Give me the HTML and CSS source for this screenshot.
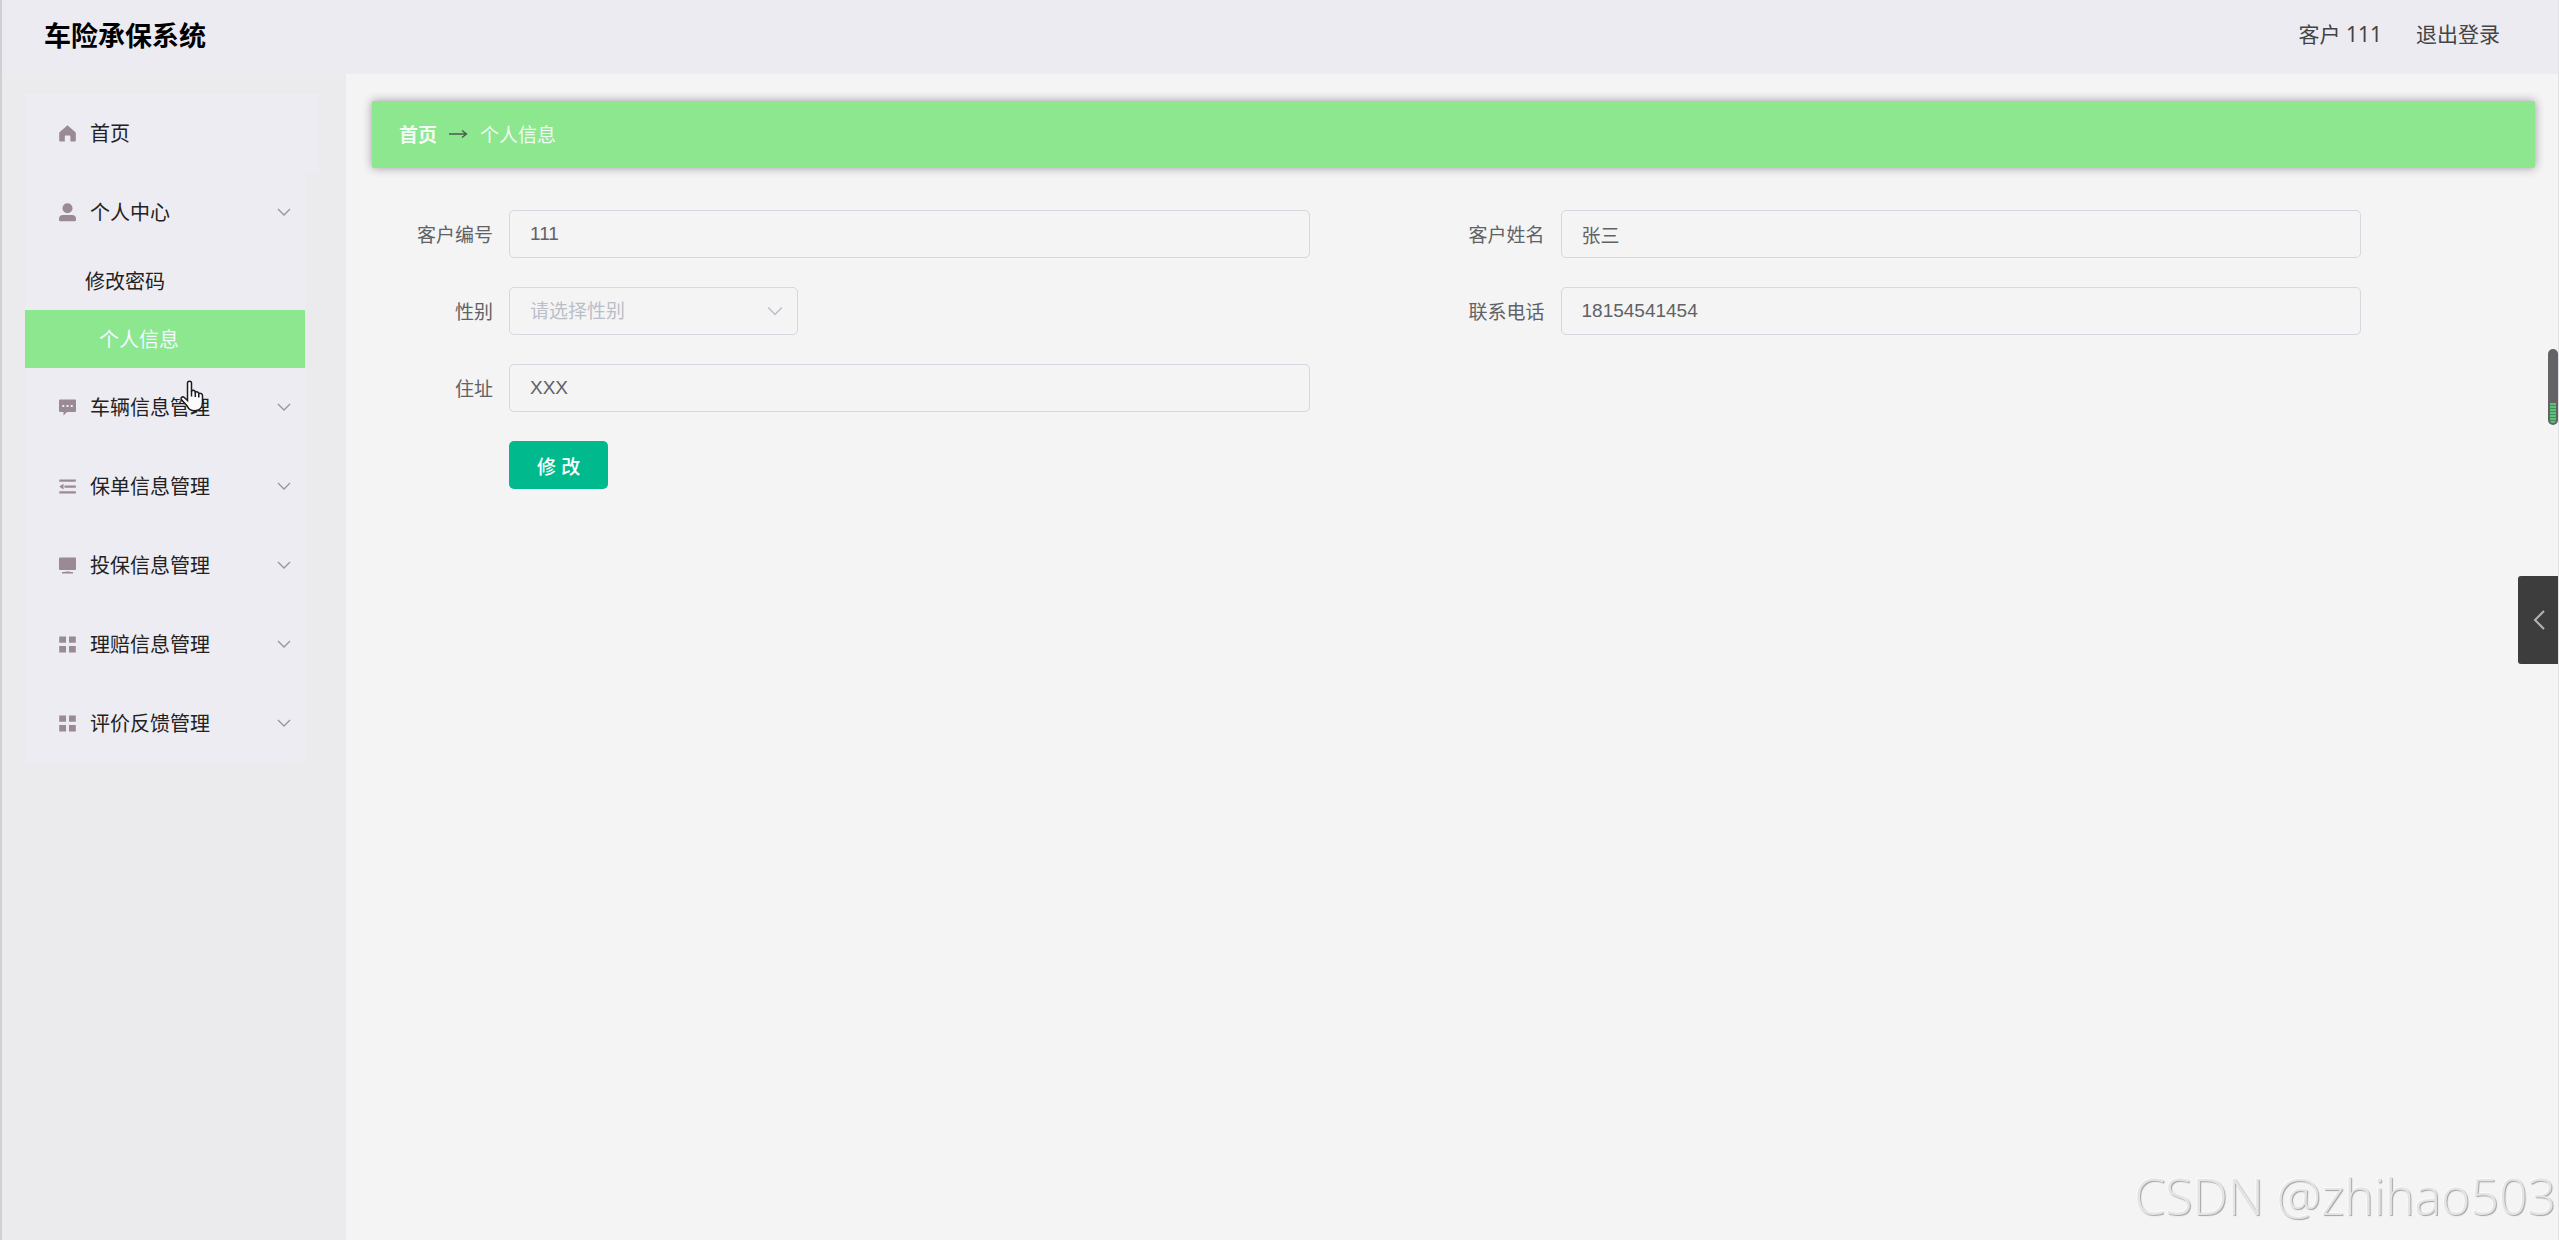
FILE: index.html
```html
<!DOCTYPE html>
<html lang="zh-CN">
<head>
<meta charset="utf-8">
<title>车险承保系统</title>
<link rel="stylesheet" href="styles.css">
</head>
<body>
<svg class="sprite" width="0" height="0" aria-hidden="true">
  <symbol id="i-down" viewBox="0 0 14 14"><path d="M1 4l6 6 6-6" fill="none" stroke="currentColor" stroke-width="1.3"/></symbol>
  <symbol id="i-home" viewBox="0 -1 17 19"><path d="M8.5 0.3L16.2 7a1.6 1.6 0 0 1 .6 1.200V15.500a1 1 0 0 1-1 1H11.400V11.600a1 1 0 0 0-1-1H6.800a1 1 0 0 0-1 1V16.500H1.200a1 1 0 0 1-1-1V8.200A1.600 1.600 0 0 1 .8 7z"/></symbol>
  <symbol id="i-user" viewBox="0 0 17 19"><circle cx="8.500" cy="5.300" r="5"/><path d="M4 12h9a4 4 0 0 1 4 4v1a1.300 1.300 0 0 1-1.300 1.300H1.300A1.300 1.300 0 0 1 0 17v-1a4 4 0 0 1 4-4z"/></symbol>
  <symbol id="i-chat" viewBox="0 -1 17 19"><path fill-rule="evenodd" d="M1 .5h15a1 1 0 0 1 1 1V12a1 1 0 0 1-1 1H8l-3.500 3.500V13H1a1 1 0 0 1-1-1V1.500a1 1 0 0 1 1-1zM3.300 6v2h2V6zM7.500 6v2h2V6zM11.700 6v2h2V6z"/></symbol>
  <symbol id="i-fold" viewBox="0 -1 17 19"><path d="M.3 1.500h16.500v2.300H.3zM5.500 7.500h11.300v2.300H5.500zM.3 13.200h16.500v2.300H.3zM.3 8.600L4.500 5.800v5.600z"/></symbol>
  <symbol id="i-screen" viewBox="0 -1 17 19"><path d="M1 .5h15a1 1 0 0 1 1 1V12a1 1 0 0 1-1 1H1a1 1 0 0 1-1-1V1.500a1 1 0 0 1 1-1zM6.500 14.500h4l.5.500h3v1.500H3V15h3z"/></symbol>
  <symbol id="i-grid" viewBox="0 -1 17 19"><path d="M.2.5h6.800v6.300H.2zM10 .5h6.800v6.300H10zM.2 10h6.800v6.500H.2zM10 10h6.800v6.500H10z"/></symbol>
</svg>

<header class="topbar">
  <h1 class="brand">车险承保系统</h1>
  <div class="account">
    <span>客户 111</span>
    <a href="#logout">退出登录</a>
  </div>
</header>

<div class="layout">
  <nav class="sidebar">
    <ul class="menu">
      <li><button class="item item-home"><svg class="icon"><use href="#i-home"/></svg>首页</button></li>
      <li>
        <button class="item"><svg class="icon"><use href="#i-user"/></svg>个人中心<svg class="arrow"><use href="#i-down"/></svg></button>
        <ul class="submenu">
          <li><a class="sub" href="#password">修改密码</a></li>
          <li><a class="sub active" href="#profile">个人信息</a></li>
        </ul>
      </li>
      <li><button class="item"><svg class="icon"><use href="#i-chat"/></svg>车辆信息管理<svg class="arrow"><use href="#i-down"/></svg></button></li>
      <li><button class="item"><svg class="icon"><use href="#i-fold"/></svg>保单信息管理<svg class="arrow"><use href="#i-down"/></svg></button></li>
      <li><button class="item"><svg class="icon"><use href="#i-screen"/></svg>投保信息管理<svg class="arrow"><use href="#i-down"/></svg></button></li>
      <li><button class="item"><svg class="icon"><use href="#i-grid"/></svg>理赔信息管理<svg class="arrow"><use href="#i-down"/></svg></button></li>
      <li><button class="item"><svg class="icon"><use href="#i-grid"/></svg>评价反馈管理<svg class="arrow"><use href="#i-down"/></svg></button></li>
    </ul>
  </nav>

  <main class="content">
    <div class="crumbs">
      <a class="crumb-home" href="#home">首页</a>
      <svg class="crumb-sep" viewBox="0 0 19 12"><path d="M0 6h17.500M13 2.500L17.500 6 13 9.500" fill="none" stroke="currentColor" stroke-width="1.400"/></svg>
      <span>个人信息</span>
    </div>
    <form class="form">
      <div class="field">
        <label for="no">客户编号</label>
        <input class="control" id="no" type="text" value="111">
      </div>
      <div class="field">
        <label for="name">客户姓名</label>
        <input class="control" id="name" type="text" value="张三">
      </div>
      <div class="field">
        <label for="sex">性别</label>
        <div class="picker">
          <select class="control" id="sex">
            <option>请选择性别</option>
            <option>男</option>
            <option>女</option>
          </select>
          <svg class="picker-arrow"><use href="#i-down"/></svg>
        </div>
      </div>
      <div class="field">
        <label for="tel">联系电话</label>
        <input class="control" id="tel" type="text" value="18154541454">
      </div>
      <div class="field field-start">
        <label for="addr">住址</label>
        <input class="control" id="addr" type="text" value="XXX">
      </div>
      <div class="field field-start">
        <button class="submit" type="button">修 改</button>
      </div>
    </form>
  </main>
</div>

<svg class="pointer" viewBox="0 0 24 32"><path d="M7.500 18V3.200a2 2 0 0 1 4 0V12l.300-1.500c1.800-.6 3.200 0 3.500 1.500 1.700-.6 3 0 3.400 1.400 2-.5 3.800.3 3.800 2.300v6.500c0 5-3 8.600-8 8.600-4 0-6-2-7.500-5L1.300 19.500c-.8-2 1.400-3.400 3-2L7.500 20.500z" fill="#fbfbfb" stroke="#1c1c24" stroke-width="1.500"/><path d="M11.500 11v5.500M15.300 12v5M18.800 13.500v4" stroke="#1c1c24" stroke-width="1.500"/></svg>
<div class="meter"><div class="meter-level"></div></div>
<button class="drawer" aria-label="展开"><svg viewBox="0 0 12 20"><path d="M11 1L2 10l9 9" fill="none" stroke="#b4b4b4" stroke-width="2"/></svg></button>
<div class="watermark">CSDN @zhihao503</div>
</body>
</html>
```
FILE: styles.css
```css
* { box-sizing: border-box; }

body {
  position: relative;
  display: flex;
  flex-direction: column;
  min-height: 100vh;
  margin: 0;
  border-left: 2px solid #d0cfd3;
  border-right: 1px solid #e2e2e6;
  background: #f4f4f4;
  color: #222;
  font-family: "Liberation Sans", "Noto Sans CJK SC", sans-serif;
  font-size: 19px;
  overflow-x: hidden;
}

ul { margin: 0; padding: 0; list-style: none; }
a { color: inherit; text-decoration: none; }
button, input, select { font: inherit; }
.sprite { position: absolute; }

.topbar {
  display: flex;
  align-items: center;
  justify-content: space-between;
  height: 74px;
  padding: 0 58px 4px 42px;
  background: #ecebf2;
}
.brand {
  margin: 0;
  padding-top: 3px;
  color: #000;
  font-size: 27px;
  line-height: 36px;
}
.account {
  display: flex;
  gap: 34px;
  padding-bottom: 2px;
  color: #444;
  font-family: "Noto Sans", "Noto Sans CJK SC", sans-serif;
  font-size: 21px;
  line-height: 32px;
}

.layout { display: flex; flex: 1; }

.sidebar {
  flex: none;
  width: 344px;
  padding: 20px 41px 20px 23px;
  background: #ebebed;
}
.menu {
  border-radius: 4px;
  background: #ececf2;
}
.item {
  display: flex;
  align-items: center;
  width: 100%;
  height: 79px;
  padding: 0 14px 2px 34px;
  border: 0;
  background: transparent;
  color: #222;
  font-size: 20px;
  text-align: left;
}
.item-home {
  width: calc(100% + 14px);
  background: #ececf2;
}
.icon {
  width: 17px;
  height: 19px;
  margin: 2px 14px 0 0;
  fill: #9a8a96;
}
.arrow {
  width: 14px;
  height: 14px;
  margin-left: auto;
  color: #9a929c;
}
.sub {
  display: block;
  padding: 2px 0 0 60px;
  font-size: 20px;
  line-height: 56px;
}
.sub.active {
  padding-left: 74px;
  background: #8ce78f;
  color: #f4f8ff;
}

.content {
  flex: 1;
  min-width: 0;
  padding: 27px 23px 27px 26px;
}
.crumbs {
  display: flex;
  align-items: center;
  gap: 12px;
  height: 67px;
  padding: 0 27px 2px;
  border-radius: 2px;
  background: #8ce78f;
  box-shadow: 0 0 10px rgba(60, 40, 70, 0.45);
  color: #f2fbf4;
}
.crumb-home { font-weight: 700; }
.crumb-sep {
  width: 19px;
  height: 12px;
  color: #4a5a54;
}

.form {
  display: grid;
  grid-template-columns: 1fr 1fr;
  row-gap: 29px;
  padding: 42px 60px 0 0;
}
.field {
  display: grid;
  grid-template-columns: 121px 1fr;
  column-gap: 16px;
  align-items: center;
  padding-right: 114px;
  color: #606266;
}
.field-start { grid-column: 1; }
.field label {
  padding-bottom: 2px;
  text-align: right;
}
.control {
  width: 100%;
  height: 48px;
  padding: 0 20px;
  border: 1px solid #d6d7df;
  border-radius: 5px;
  background: transparent;
  color: #606266;
  appearance: none;
}
.picker { position: relative; width: 289px; }
.picker .control { color: #bbbec8; }
.picker-arrow {
  position: absolute;
  top: 16px;
  right: 15px;
  width: 16px;
  height: 16px;
  color: #bbbec8;
  pointer-events: none;
}
.submit {
  grid-column: 2;
  justify-self: start;
  height: 48px;
  padding: 0 28px;
  border: 0;
  border-radius: 5px;
  background: #00ba8d;
  color: #fff;
  font-weight: 500;
}

.pointer {
  position: absolute;
  top: 380px;
  left: 178px;
  width: 24px;
  height: 32px;
}
.meter {
  position: absolute;
  top: 349px;
  right: 0;
  display: flex;
  align-items: flex-end;
  width: 10px;
  height: 76px;
  padding: 2px;
  border-radius: 5px;
  background: #636366;
}
.meter-level {
  width: 100%;
  height: 20px;
  border-radius: 0 0 4px 4px;
  background: repeating-linear-gradient(#5fc07a 0 2px, #3f8f56 2px 3px);
}
.drawer {
  position: absolute;
  top: 576px;
  right: -1px;
  display: flex;
  align-items: center;
  width: 41px;
  height: 88px;
  padding: 0 0 0 15px;
  border: 0;
  border-radius: 3px 0 0 3px;
  background: #3d3d3d;
}
.drawer svg { width: 12px; height: 20px; }
.watermark {
  position: absolute;
  right: 2px;
  bottom: 12px;
  color: #e4e4e4;
  font-family: "Open Sans", sans-serif;
  font-size: 50px;
  font-weight: 300;
  line-height: 64px;
  text-shadow: 1px 1px 1px #a2a2a2, -1px -1px 0 #fafafa;
}
```
